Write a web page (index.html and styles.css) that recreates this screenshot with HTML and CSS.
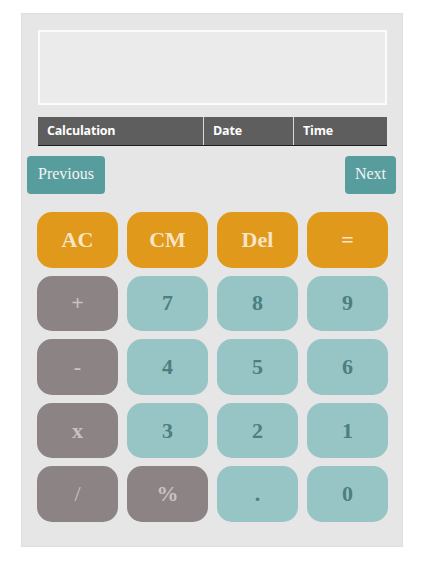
FILE: index.html
```html
<!DOCTYPE html>
<html lang="en">
<head>
  <meta charset="UTF-8">
  <meta name="viewport" content="width=device-width, initial-scale=1.0">
  <link rel="stylesheet" href="styles.css">
  <title>Calculator</title>
</head>
<body>
  <div class="calculator">
    <div class="screen"></div>
    <div class="history">
      <div class="col col-calc">Calculation</div><div class="col col-date">Date</div><div class="col col-time">Time</div>
    </div>
    <div class="nav">
      <button class="nav-btn prev">Previous</button>
      <button class="nav-btn next">Next</button>
    </div>
    <div class="keys">
      <button class="key fn">AC</button>
      <button class="key fn">CM</button>
      <button class="key fn">Del</button>
      <button class="key fn">=</button>
      <button class="key op">+</button>
      <button class="key num">7</button>
      <button class="key num">8</button>
      <button class="key num">9</button>
      <button class="key op">-</button>
      <button class="key num">4</button>
      <button class="key num">5</button>
      <button class="key num">6</button>
      <button class="key op">x</button>
      <button class="key num">3</button>
      <button class="key num">2</button>
      <button class="key num">1</button>
      <button class="key op thin">/</button>
      <button class="key op">%</button>
      <button class="key num">.</button>
      <button class="key num">0</button>
    </div>
  </div>
</body>
</html>
```

FILE: styles.css
```css
  body {
    margin: 0;
    background-color: #ffffff;
  }

  .calculator {
    box-sizing: border-box;
    margin: 13px 0 0 21px;
    width: 382px;
    height: 534px;
    padding: 16px 15px 0 15px;
    background-color: #e6e6e6;
    border: 1px solid #dedede;
  }

  .screen {
    box-sizing: border-box;
    margin-left: 1px;
    width: 349px;
    height: 75px;
    background-color: #ebebeb;
    border: 2px solid #fbfbfb;
  }

  .history {
    display: flex;
    box-sizing: border-box;
    margin: 12px 0 0 1px;
    width: 349px;
    height: 29px;
    background-color: #5e5e5e;
    border-bottom: 1px solid #1e1e1e;
  }

  .col {
    box-sizing: border-box;
    padding: 5px 0 0 9px;
    color: #ffffff;
    font-family: "Open Sans", sans-serif;
    font-weight: 700;
    font-size: 12.5px;
    letter-spacing: -0.2px;
  }

  .col-calc {
    width: 165px;
  }

  .col-date {
    width: 90px;
    border-left: 1px solid #d8d8d8;
  }

  .col-time {
    flex: 1;
    border-left: 1px solid #d8d8d8;
  }

  .nav {
    display: flex;
    justify-content: space-between;
    margin: 10px -9px 0 -10px;
  }

  .nav-btn {
    height: 38px;
    padding: 0 0 2px;
    border: none;
    border-radius: 4px;
    background-color: #589d9d;
    color: #f4f4f4;
    font-family: "Liberation Serif", serif;
    font-size: 16px;
  }

  .prev {
    width: 78px;
  }

  .next {
    width: 51px;
  }

  .keys {
    display: grid;
    grid-template-columns: repeat(4, 81px);
    grid-auto-rows: 55.5px;
    gap: 8.1px 9px;
    margin-top: 18px;
  }

  .key {
    border: none;
    border-radius: 15px;
    font-family: "Liberation Serif", serif;
    font-weight: 700;
    font-size: 22px;
    padding: 0;
  }

  .fn {
    background-color: #e0991a;
    color: #f8e4c6;
  }

  .op {
    background-color: #8c8484;
    color: #c9c1c1;
  }

  .thin {
    font-weight: 400;
  }

  .num {
    background-color: #97c4c5;
    color: #4b7f80;
  }
```
